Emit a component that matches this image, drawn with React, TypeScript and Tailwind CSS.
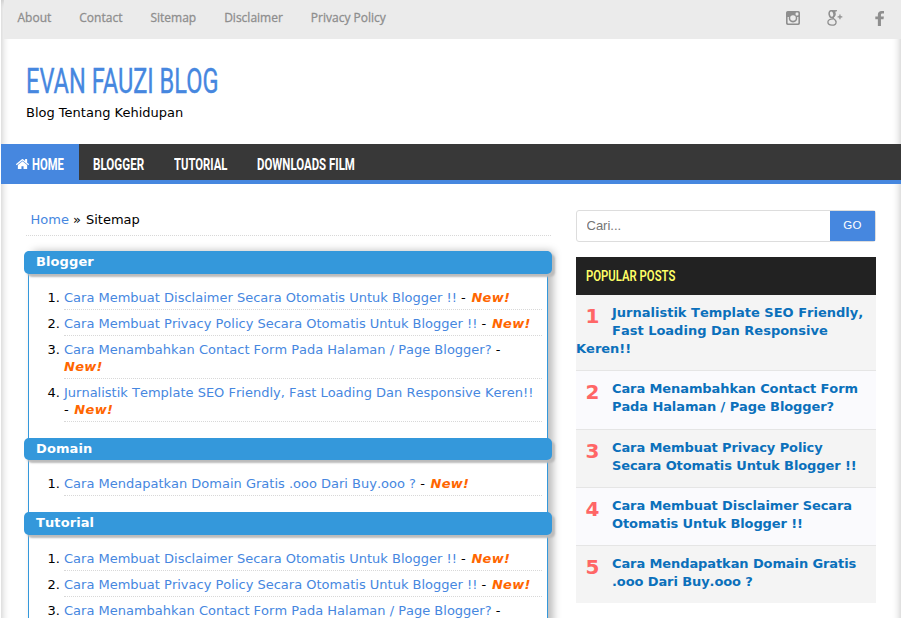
import React from 'react';

interface Post {
  title: string;
}

const PAGES = ['About', 'Contact', 'Sitemap', 'Disclaimer', 'Privacy Policy'];

const DISCLAIMER = { title: 'Cara Membuat Disclaimer Secara Otomatis Untuk Blogger !!' };
const PRIVACY = { title: 'Cara Membuat Privacy Policy Secara Otomatis Untuk Blogger !!' };
const CONTACT = { title: 'Cara Menambahkan Contact Form Pada Halaman / Page Blogger?' };
const JURNALISTIK = { title: 'Jurnalistik Template SEO Friendly, Fast Loading Dan Responsive Keren!!' };
const DOMAIN = { title: 'Cara Mendapatkan Domain Gratis .ooo Dari Buy.ooo ?' };

const SECTIONS: { label: string; posts: Post[] }[] = [
  { label: 'Blogger', posts: [DISCLAIMER, PRIVACY, CONTACT, JURNALISTIK] },
  { label: 'Domain', posts: [DOMAIN] },
  { label: 'Tutorial', posts: [DISCLAIMER, PRIVACY, CONTACT] },
];

const POPULAR: Post[] = [JURNALISTIK, CONTACT, PRIVACY, DISCLAIMER, DOMAIN];

const InstagramIcon = () => (
  <svg viewBox="0 0 14 14" className="w-[14px] h-[14px]" fill="currentColor">
    <path fillRule="evenodd" d="M1.7 0h10.6A1.7 1.7 0 0 1 14 1.7v10.6a1.7 1.7 0 0 1-1.7 1.7H1.7A1.7 1.7 0 0 1 0 12.3V1.7A1.7 1.7 0 0 1 1.7 0ZM1.6 5.9v5.9c0 .3.3.6.6.6h9.6c.3 0 .6-.3.6-.6V5.9h-1.3a4.3 4.3 0 1 1-8.2 0ZM10.2 1.6c-.4 0-.6.3-.6.6v1.6c0 .4.3.6.6.6h1.6c.4 0 .6-.3.6-.6V2.2c0-.4-.3-.6-.6-.6ZM7 4.2a2.8 2.8 0 1 0 0 5.6 2.8 2.8 0 0 0 0-5.6Z" />
  </svg>
);

const GooglePlusIcon = () => (
  <svg viewBox="0 0 16 16" className="w-[16px] h-[16px]" fill="none" stroke="currentColor">
    <ellipse cx="4.6" cy="4.1" rx="2.4" ry="3.4" strokeWidth="1.6" transform="rotate(-12 4.6 4.1)" />
    <path d="M4.6.6h5.3L8.4 1.4H6.6" strokeWidth="1" />
    <path d="M6.8 1.4c1.7 1.6 1.6 3.6.2 4.9-1.3 1.2-1.4 1.6 0 2.7 1.3.9 2.1 1.6 2.1 2.9" strokeWidth="1.5" />
    <path d="M6.2 8.9C2.9 8.9.9 10 .9 12.1c0 1.8 1.7 3.1 4 3.1 2.5 0 4.2-1.3 4.2-3.3" strokeWidth="1.3" />
    <path d="M10.6 6.9h4.7M12.95 4.5v4.8" strokeWidth="1.2" />
  </svg>
);

const FacebookIcon = () => (
  <svg viewBox="448 0 896 1664" className="w-[9px] h-[15px]" preserveAspectRatio="none" fill="currentColor">
    <path d="M1343 12v264h-157q-86 0-116 36t-30 108v189h293l-39 296h-254v759H734V905H479V609h255V391q0-186 104-288.500T1115 0q147 0 228 12z" />
  </svg>
);

const HomeIcon = () => (
  <svg viewBox="90 250 1612 1290" className="w-[13px] h-[10.5px]" fill="currentColor">
    <path d="M1472 992v480q0 26-19 45t-45 19h-384v-384h-256v384H384q-26 0-45-19t-19-45V992q0-1 .5-3t.5-3l575-474 575 474q1 2 1 6zm223-69l-62 74q-8 9-21 11h-3q-13 0-21-7L896 424l-692 577q-12 8-24 7-13-2-21-11l-62-74q-8-10-7-23.500T101 878l719-599q32-26 76-26t76 26l244 204V288q0-14 9-23t23-9h192q14 0 23 9t9 23v408l219 182q10 8 11 21.500t-7 23.500z" />
  </svg>
);

// Narrow capitals: the inner text is squeezed into the width of its box
const Narrow = ({ children, box, scale }: { children: React.ReactNode; box: string; scale: string }) => (
  <span className={`inline-block whitespace-nowrap ${box}`}>
    <span className={`inline-block origin-left ${scale}`}>{children}</span>
  </span>
);

const Section = ({ label, posts }: { label: string; posts: Post[] }) => (
  <section>
    <h3 className="relative -mx-[5px] h-[22.6px] pl-3 rounded-[5px] bg-[#3498db] text-white font-bold leading-[22.8px] tracking-[0.1px] shadow-[3px_3px_2px_#bbb]">
      {label}
    </h3>
    <ol className="pt-[10px] pb-4 pl-[35px] pr-[5px] list-decimal">
      {posts.map(post => (
        <li key={post.title} className="pt-[5px] pb-[3px] leading-[17px] border-b border-dotted border-[#d8d8d8]">
          <a href="#" className="text-[#4687df]">{post.title}</a> <span className="tracking-[1.5px]">-</span>{' '}
          <strong className="italic tracking-[0.3px] text-[#ff6600]">New!</strong>
        </li>
      ))}
    </ol>
  </section>
);

const App: React.FC = () => {
  return (
    <div className="h-[618px] w-[902px] px-px overflow-hidden bg-white text-black text-[13px] font-['DejaVu_Sans',sans-serif] [font-kerning:none]">
      <div className="h-[640px] shadow-[inset_0_0_8px_#bbb]">
        <div className="ml-[3px] h-[39px] flex items-start justify-between bg-[#ebebeb] text-[#8e8e8e]">
          <nav className="flex gap-[28px] pl-[13.5px] pt-[9px] text-[12px] leading-[18px] font-['Open_Sans',sans-serif] [-webkit-text-stroke:0.3px_#8e8e8e] [font-kerning:normal]">
            {PAGES.map(page => <a key={page} href="#">{page}</a>)}
          </nav>
          <div className="flex items-center pt-[10px] pr-[17px]">
            <InstagramIcon />
            <span className="ml-[27px]"><GooglePlusIcon /></span>
            <span className="ml-[32px]"><FacebookIcon /></span>
          </div>
        </div>

        <header className="h-[105px] pl-[25px] pt-[22px]">
          <h1 className="h-[41px] leading-[42px] text-[35px] text-[#4687df] font-normal font-['Roboto',sans-serif] [font-kerning:normal] [-webkit-text-stroke:0.4px_#4687df]">
            <Narrow box="w-[192px]" scale="scale-x-[0.674]">EVAN FAUZI BLOG</Narrow>
          </h1>
          <p className="leading-[21px] [font-kerning:normal]">Blog Tentang Kehidupan</p>
        </header>

        <nav className="h-[40px] flex bg-[#383838] border-b-4 border-[#4687df] text-white text-[16px] leading-[41px] font-bold font-['Roboto',sans-serif] [font-kerning:normal]">
          <a href="#" className="flex h-[40px] w-[78px] items-center pl-[14.5px] bg-[#4687df]">
            <HomeIcon />
            <span className="ml-[3.5px]"><Narrow box="w-[33px]" scale="scale-x-[0.7]">HOME</Narrow></span>
          </a>
          <a href="#" className="ml-[14.4px]"><Narrow box="w-[51px]" scale="scale-x-[0.725]">BLOGGER</Narrow></a>
          <a href="#" className="ml-[29.6px]"><Narrow box="w-[53px]" scale="scale-x-[0.705]">TUTORIAL</Narrow></a>
          <a href="#" className="ml-[30px]"><Narrow box="w-[98px]" scale="scale-x-[0.715]">DOWNLOADS FILM</Narrow></a>
        </nav>

        <div className="flex pl-[25px]">
          <main className="w-[525px]">
            <div className="mt-[26px] h-[26px] pl-[4.5px] leading-[19px] border-b border-dotted border-[#d8d8d8]">
              <a href="#" className="text-[#4687df]">Home</a> <span className="tracking-[0.8px]">»</span> Sitemap
            </div>
            <div className="mt-[15.2px] ml-[2px] w-[520px] h-[600px] border-x border-[#3498db] shadow-[5px_0_8px_#bbb]">
              {SECTIONS.map(section => (
                <Section key={section.label} label={section.label} posts={section.posts} />
              ))}
            </div>
          </main>

          <aside className="ml-[25px] mt-[26px] w-[300px]">
            <form className="h-[32px] flex border border-[#ddd] rounded-[3px] font-['Liberation_Sans',sans-serif]">
              <input type="text" placeholder="Cari..." className="flex-1 min-w-0 pl-[9.5px] text-[13px] placeholder:text-[#757575] outline-none" />
              <button type="button" className="w-[45px] bg-[#4687df] text-white text-[11.5px] tracking-[0.3px]">GO</button>
            </form>

            <h2 className="mt-[15px] h-[38px] pl-[10px] bg-[#222] text-[#ffff66] text-[15px] leading-[38px] font-semibold font-['Roboto',sans-serif] [font-kerning:normal]">
              <Narrow box="w-[91px]" scale="scale-x-[0.755]">POPULAR POSTS</Narrow>
            </h2>
            <ul className="font-bold text-[#0b70bb] leading-[18px]">
              {POPULAR.map((post, i) => (
                <li key={post.title} className="pt-[9px] pb-[12.3px] border-b border-[#e5e5e5] last:border-0 odd:bg-[#f4f4f4] even:bg-[#fafafd] not-first:tracking-[-0.1px]">
                  <span className="float-left w-[36px] pl-[9.5px] pt-[1px] h-[30px] text-[20px] leading-[22px] text-[#ff6666]">{i + 1}</span>
                  <a href="#">{post.title}</a>
                </li>
              ))}
            </ul>
          </aside>
        </div>
      </div>
    </div>
  );
};

export default App;
